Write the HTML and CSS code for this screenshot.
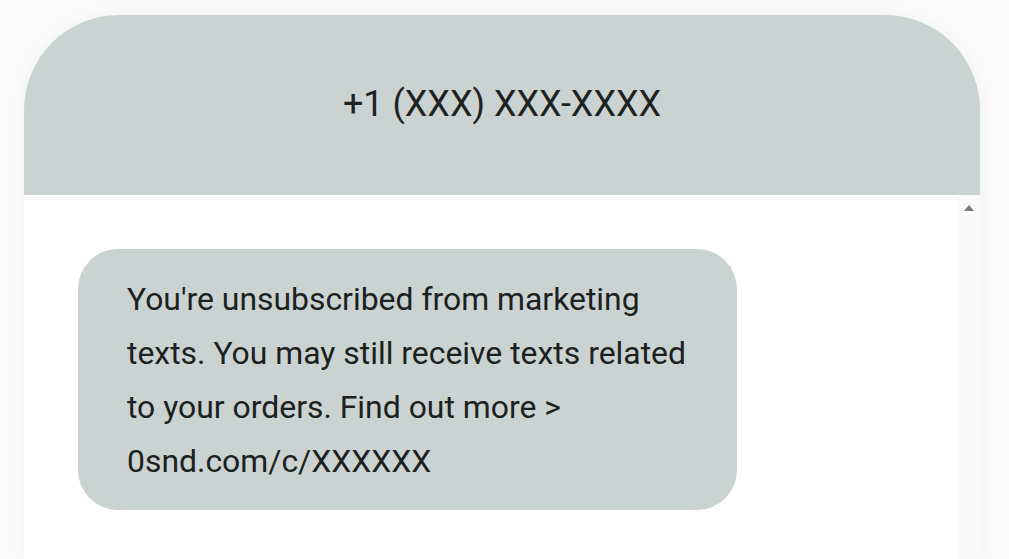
FILE: index.html
```html
<!DOCTYPE html>
<html lang="en">
<head>
    <meta charset="UTF-8">
    <meta name="viewport" content="width=device-width, initial-scale=1.0">
    <title>Message Preview</title>
    <link rel="stylesheet" href="styles.css">
</head>
<body>
    <div class="phone">
        <div class="phone-header">
            <h2>+1 (XXX) XXX-XXXX</h2>
        </div>
        <div class="thread">
            <div class="messages">
                <div class="bubble">
                    You're unsubscribed from marketing texts. You may still receive texts related to your orders. Find out more &gt; 0snd.com/c/XXXXXX
                </div>
            </div>
            <div class="scrollbar">
                <span class="arrow-up"></span>
            </div>
        </div>
    </div>
</body>
</html>
```

FILE: styles.css
```css
body {
    font-family: 'Roboto', 'Liberation Sans', sans-serif;
    margin: 0;
    background-color: #fcfcfc;
    height: 559px;
    overflow: hidden;
}
.phone {
    width: 956px;
    margin: 15px 0 0 24px;
    background: #ffffff;
    border-radius: 95px 95px 0 0;
    box-shadow: 0 0 24px rgba(0,0,0,0.05);
}
.phone-header {
    height: 180px;
    background-color: #cad3d2;
    border-radius: 95px 95px 0 0;
    display: flex;
    justify-content: center;
    align-items: center;
}
.phone-header h2 {
    margin: 0;
    font-weight: 400;
    font-size: 36px;
    color: #1e2322;
    padding-bottom: 2px;
}
.thread {
    display: flex;
    height: 364px;
}
.messages {
    flex: 1;
    padding: 54px 0 0 54px;
}
.bubble {
    width: 561px;
    background-color: #cad3d2;
    border-radius: 40px;
    padding: 23px 49px 22px 49px;
    font-size: 31.9px;
    line-height: 54px;
    color: #1c2120;
}
.scrollbar {
    width: 23px;
    background: #fafafa;
    display: flex;
    justify-content: center;
}
.arrow-up {
    margin-top: 10px;
    margin-left: 1px;
    width: 0;
    height: 0;
    border-left: 5px solid transparent;
    border-right: 5px solid transparent;
    border-bottom: 6px solid #7a7a7a;
}
```
